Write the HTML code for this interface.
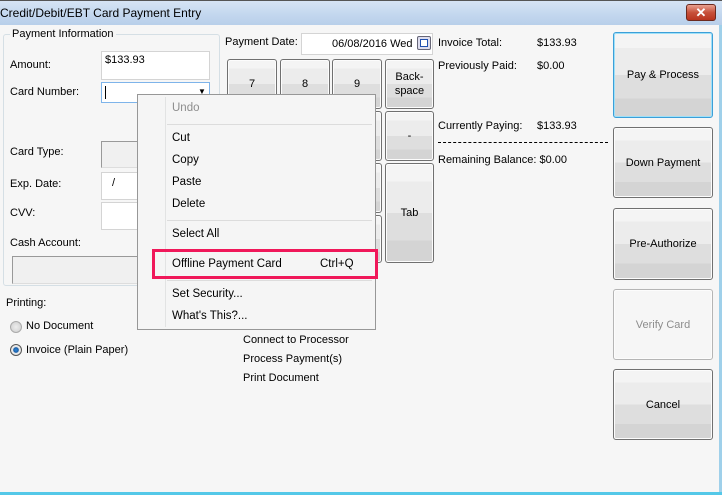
<!DOCTYPE html>
<html><head><style>
*{box-sizing:border-box;margin:0;padding:0}
body{width:722px;height:495px;overflow:hidden;background:#f6f6f6;font-family:"Liberation Sans",sans-serif;font-size:11px;color:#000;position:relative}
.a{position:absolute;white-space:nowrap}
.title{left:0;top:0;width:722px;height:25px;background:linear-gradient(#d6e4f4,#c2d6ee 60%,#b8cfea);border-top:1px solid #555;font-size:12px;padding:5px 0 0 0}
.inp{position:absolute;background:#fff;border:1px solid #d4d4d4}
.dis{position:absolute;background:#f0f0f0;border:1px solid #999;border-right-color:#ddd;border-bottom-color:#ddd}
.btn{position:absolute;border:1px solid #707070;border-radius:3px;background:linear-gradient(#f4f4f4 0,#f4f4f4 18%,#ececec 18%,#ececec 50%,#dedede 50%,#dedede 78%,#d4d4d4 78%);display:flex;align-items:center;justify-content:center;text-align:center;line-height:14px;box-shadow:inset 0 0 0 1px #fcfcfc}
.menu{left:137px;top:94px;width:239px;height:236px;background:#f5f5f5;border:1px solid #979797;font-size:11.5px}
.menu .g{position:absolute;left:27px;top:2px;bottom:2px;width:1px;background:#e2e3e3}
.menu .s{position:absolute;left:29px;right:3px;height:1px;background:#dcdcdc}
.menu .i{position:absolute;left:34px}
</style></head><body>
<div class="a title">Credit/Debit/EBT Card Payment Entry</div>
<div class="a" style="left:686px;top:4px;width:30px;height:17px;border:1px solid #6b2a1f;border-radius:3px;background:linear-gradient(#e9a18f,#c7513b 50%,#b8341f);color:#fff;font-weight:bold;font-size:13px;text-align:center;line-height:15px">✕</div>
<div class="a" style="left:719px;top:25px;width:3px;height:470px;background:#9fd0ea"></div>
<div class="a" style="left:0;top:492px;width:722px;height:3px;background:#54c8e8"></div>

<div class="a" style="left:3px;top:34px;width:217px;height:252px;border:1px solid #d5dfe5;border-radius:3px"></div>
<div class="a" style="left:10px;top:28px;background:#f6f6f6;padding:0 2px">Payment Information</div>
<div class="a" style="left:10px;top:59px">Amount:</div>
<div class="inp" style="left:101px;top:51px;width:109px;height:29px;padding:2px 3px">$133.93</div>
<div class="a" style="left:10px;top:86px">Card Number:</div>
<div class="inp" style="left:101px;top:82px;width:109px;height:21px;border-color:#7eb4ea"><div class="a" style="left:3px;top:3px;width:1px;height:13px;background:#000"></div><div class="a" style="left:96px;top:4px;font-size:8px">▼</div></div>
<div class="a" style="left:10px;top:146px">Card Type:</div>
<div class="dis" style="left:101px;top:141px;width:40px;height:27px"></div>
<div class="a" style="left:10px;top:178px">Exp. Date:</div>
<div class="inp" style="left:101px;top:172px;width:40px;height:28px;padding:4px 10px">/</div>
<div class="a" style="left:10px;top:207px">CVV:</div>
<div class="inp" style="left:101px;top:202px;width:40px;height:28px"></div>
<div class="a" style="left:10px;top:237px">Cash Account:</div>
<div class="dis" style="left:12px;top:256px;width:130px;height:28px"></div>

<div class="a" style="left:6px;top:297px">Printing:</div>
<div class="a" style="left:10px;top:321px;width:12px;height:12px;border-radius:50%;border:1px solid #aaa;background:radial-gradient(#eee,#ccc)"></div>
<div class="a" style="left:26px;top:320px">No Document</div>
<div class="a" style="left:10px;top:344px;width:12px;height:12px;border-radius:50%;border:1px solid #555;background:radial-gradient(#2b86d8 0,#1c5fa8 35%,#e8e8e8 45%)"></div>
<div class="a" style="left:26px;top:344px">Invoice (Plain Paper)</div>

<div class="a" style="left:225px;top:36px">Payment Date:</div>
<div class="inp" style="left:301px;top:33px;width:132px;height:22px;padding:4px 0 0 30px">06/08/2016 Wed</div>
<div class="a" style="left:417px;top:36px;width:14px;height:14px;border:1px solid #667;border-radius:2px;background:#dde;"><div class="a" style="left:2px;top:2px;width:8px;height:8px;border:1px solid #2050b0;background:#fff"></div></div>

<div class="btn" style="left:227px;top:59px;width:50px;height:50px">7</div>
<div class="btn" style="left:280px;top:59px;width:50px;height:50px">8</div>
<div class="btn" style="left:332px;top:59px;width:50px;height:50px">9</div>
<div class="btn" style="left:385px;top:59px;width:49px;height:50px">Back-<br>space</div>
<div class="btn" style="left:332px;top:111px;width:50px;height:50px"></div>
<div class="btn" style="left:385px;top:111px;width:49px;height:50px">-</div>
<div class="btn" style="left:332px;top:163px;width:50px;height:50px"></div>
<div class="btn" style="left:332px;top:215px;width:50px;height:48px"></div>
<div class="btn" style="left:385px;top:163px;width:49px;height:100px">Tab</div>

<div class="a" style="left:243px;top:334px">Connect to Processor</div>
<div class="a" style="left:243px;top:353px">Process Payment(s)</div>
<div class="a" style="left:243px;top:372px">Print Document</div>

<div class="a" style="left:438px;top:37px">Invoice Total:</div><div class="a" style="left:537px;top:37px">$133.93</div>
<div class="a" style="left:438px;top:60px">Previously Paid:</div><div class="a" style="left:537px;top:60px">$0.00</div>
<div class="a" style="left:438px;top:120px">Currently Paying:</div><div class="a" style="left:537px;top:120px">$133.93</div>
<div class="a" style="left:438px;top:142px;width:170px;border-top:1px dashed #000"></div>
<div class="a" style="left:438px;top:154px">Remaining Balance: $0.00</div>

<div class="btn" style="left:613px;top:32px;width:100px;height:86px;border-color:#3c9fd8;box-shadow:inset 0 0 0 1px #9ee0f8">Pay &amp; Process</div>
<div class="btn" style="left:613px;top:127px;width:100px;height:71px">Down Payment</div>
<div class="btn" style="left:613px;top:208px;width:100px;height:72px">Pre-Authorize</div>
<div class="btn" style="left:613px;top:289px;width:100px;height:71px;background:#f6f6f6;border-color:#b5b5b5;color:#8d8d8d">Verify Card</div>
<div class="btn" style="left:613px;top:369px;width:100px;height:71px">Cancel</div>

<div class="a menu">
<div class="g"></div>
<div class="i" style="top:7px;color:#8d8d8d">Undo</div>
<div class="s" style="top:29px"></div>
<div class="i" style="top:37px">Cut</div>
<div class="i" style="top:59px">Copy</div>
<div class="i" style="top:81px">Paste</div>
<div class="i" style="top:103px">Delete</div>
<div class="s" style="top:125px"></div>
<div class="i" style="top:133px">Select All</div>
<div class="s" style="top:155px"></div>
<div class="i" style="top:163px">Offline Payment Card</div>
<div class="i" style="left:182px;top:163px">Ctrl+Q</div>
<div class="s" style="top:185px"></div>
<div class="i" style="top:193px">Set Security...</div>
<div class="i" style="top:215px">What's This?...</div>
</div>
<div class="a" style="left:152px;top:249px;width:226px;height:30px;border:3px solid #f0185a"></div>
</body></html>
